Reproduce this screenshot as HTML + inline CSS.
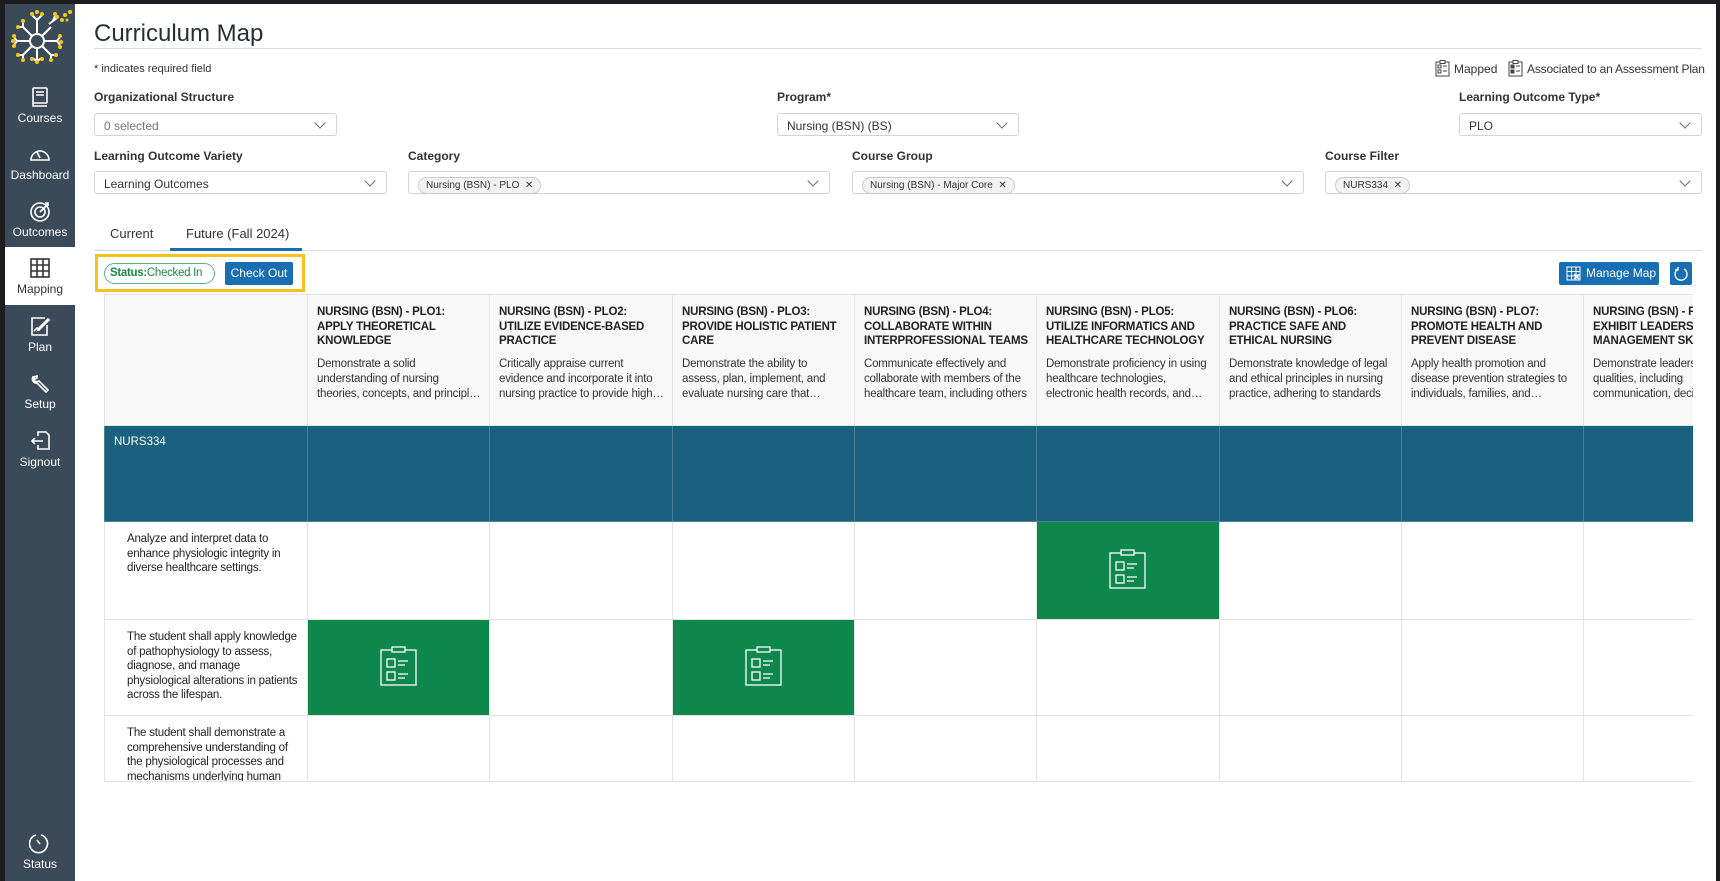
<!DOCTYPE html>
<html><head><meta charset="utf-8">
<style>
*{box-sizing:border-box;margin:0;padding:0}
body{width:1720px;height:881px;background:#1c1c1e;font-family:"Liberation Sans",Arial,sans-serif;color:#222;position:relative;overflow:hidden}
.side{position:absolute;left:5px;top:4px;width:70px;height:877px;background:#3b4a58}
.main{position:absolute;left:75px;top:4px;width:1641px;height:877px;background:#fff;overflow:hidden}
.nav{position:absolute;left:0;width:70px;text-align:center;color:#fff;font-size:12px}
.nav svg{display:block;margin:0 auto 3px}
.nav.act{background:#fff;color:#333;height:58px;padding-top:10px}
.a{position:absolute}
.lbl{position:absolute;font-size:12px;font-weight:bold;color:#333}
.sel{position:absolute;height:23px;border:1px solid #d4d4d4;border-radius:3px;font-size:12px;color:#333;padding:5px 9px;background:#fff}
.sel:after{content:"";position:absolute;right:12px;top:5px;width:7px;height:7px;border-right:1px solid #666;border-bottom:1px solid #666;transform:rotate(45deg)}
.chip{display:inline-block;border:1px solid #ccc;background:#f2f2f2;border-radius:10px;font-size:10px;padding:2px 7px;margin-top:-3px;color:#333}
.wrap{position:absolute;left:29px;top:290px;width:1589px;height:500px;overflow:hidden}
table{position:absolute;left:0;top:0;border-collapse:collapse;table-layout:fixed;width:1661px}
td{border:1px solid #e4e4e4;vertical-align:top;font-size:11.5px}
th{border:1px solid #e4e4e4;background:#f8f8f8;text-align:left;vertical-align:top;padding:10px 8px 10px 9px;font-size:11.5px;font-weight:normal;color:#222}
th b{display:-webkit-box;-webkit-line-clamp:3;-webkit-box-orient:vertical;height:44px;line-height:14.5px;font-size:11.5px;overflow:hidden;margin-bottom:8px;letter-spacing:-0.2px}
th span{display:-webkit-box;-webkit-line-clamp:3;-webkit-box-orient:vertical;line-height:15px;height:45px;overflow:hidden;color:#333;letter-spacing:-0.2px}
tr.n td{background:#19617f;border-color:#4b7f96;color:#fff}
td.t{padding:10px 8px 0 22px;line-height:14.5px;color:#222;letter-spacing:-0.2px}
td.g{background:#0d874c}
</style></head><body>
<div class="side">
<svg class="a" style="left:4px;top:4px" width="64" height="56" viewBox="0 0 64 56">
<g stroke="#fff" stroke-width="2" fill="none"><circle cx="28" cy="33" r="7"/>
<path d="M28 26V12M28 40V53M21 33H8M35 33H48M23 28L14 19M33 28L42 19M23 38L14 47M33 38L42 47M28 12l-5-5M28 12l5-5M28 53l-5-3M28 53l5-3M8 33l-3-4M8 33l-3 4M48 33l3-4M48 33l3 4M14 19l-5 0M14 19l0-5M42 47l5 0M42 47l0 5M14 47l-5 0M14 47l0 5M40 16l8-6M44 13l2-5"/></g>
<g fill="#f5c518"><circle cx="23" cy="6" r="2"/><circle cx="33" cy="6" r="2"/><circle cx="28" cy="4" r="2"/><circle cx="5" cy="28" r="2"/><circle cx="4" cy="33" r="2"/><circle cx="5" cy="38" r="2"/><circle cx="51" cy="28" r="2"/><circle cx="52" cy="34" r="2"/><circle cx="51" cy="39" r="2"/><circle cx="9" cy="19" r="2"/><circle cx="14" cy="13" r="2"/><circle cx="9" cy="47" r="2"/><circle cx="14" cy="52" r="2"/><circle cx="47" cy="47" r="2"/><circle cx="42" cy="52" r="2"/><circle cx="23" cy="51" r="2"/><circle cx="33" cy="51" r="2"/><circle cx="28" cy="54" r="2"/><circle cx="48" cy="9" r="2"/><circle cx="46" cy="6" r="2"/><circle cx="53" cy="12" r="2"/><circle cx="56" cy="7" r="2"/><circle cx="61" cy="4" r="2"/><circle cx="58" cy="12" r="1.5"/></g></svg>
<div class="nav" style="top:82px"><svg width="20" height="22" viewBox="0 0 20 22" fill="none" stroke="#fff" stroke-width="1.6"><rect x="3" y="2" width="14" height="15" rx="1"/><path d="M6 6h8M6 9h8M3 17v3h14"/></svg>Courses</div>
<div class="nav" style="top:139px"><svg width="24" height="22" viewBox="0 0 24 22" fill="none" stroke="#fff" stroke-width="1.6"><path d="M3 17A9 9 0 1 1 21 17Z"/><path d="M12 15l-3-6"/></svg>Dashboard</div>
<div class="nav" style="top:196px"><svg width="22" height="22" viewBox="0 0 22 22" fill="none" stroke="#fff" stroke-width="1.6"><circle cx="11" cy="12" r="9"/><circle cx="11" cy="12" r="5"/><path d="M11 12l8-8M16 3h3v3"/></svg>Outcomes</div>
<div class="nav act" style="top:243px"><svg width="22" height="22" viewBox="0 0 22 22" fill="none" stroke="#333" stroke-width="1.6"><rect x="2" y="2" width="18" height="18"/><path d="M8 2v18M14 2v18M2 8h18M2 14h18"/></svg>Mapping</div>
<div class="nav" style="top:311px"><svg width="22" height="22" viewBox="0 0 22 22" fill="none" stroke="#fff" stroke-width="1.6"><path d="M16 3H3v17h15V10"/><path d="M10 13l9-9 1 1-9 9-2 1z"/><path d="M5 16l3-3 2 2 3-4"/></svg>Plan</div>
<div class="nav" style="top:368px"><svg width="22" height="22" viewBox="0 0 22 22" fill="none" stroke="#fff" stroke-width="1.6"><path d="M4 5a4 4 0 0 0 6 4l9 9-2 2-9-9a4 4 0 0 1-4-6l2 2 2-1 0-2z"/></svg>Setup</div>
<div class="nav" style="top:426px"><svg width="22" height="22" viewBox="0 0 22 22" fill="none" stroke="#fff" stroke-width="1.6"><path d="M9 6V2h8l3 3v14H9v-4"/><path d="M14 11H3M6 8l-3 3 3 3"/></svg>Signout</div>
<div class="nav" style="top:828px"><svg width="22" height="22" viewBox="0 0 22 22" fill="none" stroke="#fff" stroke-width="1.6"><path d="M7 3a9 9 0 1 0 5 0"/><path d="M11 12l-3-4"/></svg>Status</div>
</div>
<div class="main">
<div class="a" style="left:19px;top:16px;font-size:24px;color:#2a2e33">Curriculum Map</div>
<div class="a" style="left:19px;top:44px;width:1608px;height:1px;background:#dcdcdc"></div>
<div class="a" style="left:19px;top:59px;font-size:11px;color:#333">* indicates required field</div>
<div class="a" style="left:1360px;top:56px;font-size:12px;color:#333;display:flex;align-items:center;gap:4px;white-space:nowrap">
<svg width="15" height="17" viewBox="0 0 15 17" fill="none" stroke="#444"><rect x="1" y="2" width="13" height="14"/><rect x="5" y="0.5" width="5" height="3" fill="#fff"/><rect x="3" y="5" width="3" height="3"/><rect x="3" y="10" width="3" height="3"/><path d="M8 6h4M8 11h4"/></svg>Mapped&nbsp;&nbsp;
<svg width="15" height="17" viewBox="0 0 15 17" fill="none" stroke="#444"><rect x="1" y="2" width="13" height="14"/><rect x="5" y="0.5" width="5" height="3" fill="#fff"/><rect x="3" y="5" width="3" height="3" fill="#444"/><rect x="3" y="10" width="3" height="3" fill="#444"/><path d="M8 6h4M8 11h4"/></svg><span style="letter-spacing:-0.2px">Associated to an Assessment Plan</span></div>
<div class="lbl" style="left:19px;top:86px">Organizational Structure</div>
<div class="lbl" style="left:702px;top:86px">Program*</div>
<div class="lbl" style="left:1384px;top:86px">Learning Outcome Type*</div>
<div class="sel" style="left:19px;top:109px;width:243px;color:#777">0 selected</div>
<div class="sel" style="left:702px;top:109px;width:242px">Nursing (BSN) (BS)</div>
<div class="sel" style="left:1384px;top:109px;width:243px">PLO</div>
<div class="lbl" style="left:19px;top:145px">Learning Outcome Variety</div>
<div class="lbl" style="left:333px;top:145px">Category</div>
<div class="lbl" style="left:777px;top:145px">Course Group</div>
<div class="lbl" style="left:1250px;top:145px">Course Filter</div>
<div class="sel" style="left:19px;top:167px;width:293px">Learning Outcomes</div>
<div class="sel" style="left:333px;top:167px;width:422px"><span class="chip">Nursing (BSN) - PLO &nbsp;✕</span></div>
<div class="sel" style="left:777px;top:167px;width:452px"><span class="chip">Nursing (BSN) - Major Core &nbsp;✕</span></div>
<div class="sel" style="left:1250px;top:167px;width:377px"><span class="chip">NURS334 &nbsp;✕</span></div>
<div class="a" style="left:35px;top:222px;font-size:13px;color:#333">Current</div>
<div class="a" style="left:111px;top:222px;font-size:13px;color:#333">Future (Fall 2024)</div>
<div class="a" style="left:19px;top:246px;width:1608px;height:1px;background:#dcdcdc"></div>
<div class="a" style="left:95px;top:244px;width:132px;height:3px;background:#1a6fb0"></div>
<div class="a" style="left:20px;top:250px;width:210px;height:38px;border:3px solid #f7c21b"></div>
<div class="a" style="left:29px;top:259px;width:111px;height:21px;border:1px solid #5ab57f;border-radius:11px;font-size:11.5px;color:#178a45;padding:3px 5px;white-space:nowrap;letter-spacing:-0.3px"><b>Status:</b>Checked In</div>
<div class="a" style="left:150px;top:258px;width:68px;height:23px;background:#176fb2;border-radius:2px;color:#fff;font-size:12px;text-align:center;line-height:23px">Check Out</div>
<div class="a" style="left:1484px;top:258px;width:100px;height:23px;background:#176fb2;border-radius:2px;color:#fff;font-size:12px;line-height:23px;padding-left:27px;white-space:nowrap">Manage Map
<svg class="a" style="left:7px;top:4px" width="15" height="15" viewBox="0 0 15 15" fill="none" stroke="#fff"><rect x="1" y="1" width="13" height="13"/><path d="M1 5.5h13M1 10h13M5.5 1v13M10 1v13"/><path d="M8 8l5 5M13 8l-5 5" stroke-width="1.5"/></svg></div>
<div class="a" style="left:1595px;top:258px;width:22px;height:23px;background:#176fb2;border-radius:2px">
<svg class="a" style="left:3px;top:4px" width="16" height="16" viewBox="0 0 16 16" fill="none" stroke="#fff" stroke-width="1.3"><path d="M5 3A6 6 0 1 0 11 3"/><path d="M5 1v3H2"/></svg></div>
<div class="wrap">
<table>
<colgroup><col style="width:203px"><col style="width:182px"><col style="width:183px"><col style="width:182px"><col style="width:182px"><col style="width:183px"><col style="width:182px"><col style="width:182px"><col style="width:182px"></colgroup>
<tr style="height:131px"><th></th>
<th><b>NURSING (BSN) - PLO1: APPLY THEORETICAL KNOWLEDGE</b><span>Demonstrate a solid understanding of nursing theories, concepts, and principles across practice settings</span></th>
<th><b>NURSING (BSN) - PLO2: UTILIZE EVIDENCE-BASED PRACTICE</b><span>Critically appraise current evidence and incorporate it into nursing practice to provide high quality care</span></th>
<th><b>NURSING (BSN) - PLO3: PROVIDE HOLISTIC PATIENT CARE</b><span>Demonstrate the ability to assess, plan, implement, and evaluate nursing care that addresses needs</span></th>
<th><b>NURSING (BSN) - PLO4: COLLABORATE WITHIN INTERPROFESSIONAL TEAMS</b><span>Communicate effectively and collaborate with members of the healthcare team, including others</span></th>
<th><b>NURSING (BSN) - PLO5: UTILIZE INFORMATICS AND HEALTHCARE TECHNOLOGY</b><span>Demonstrate proficiency in using healthcare technologies, electronic health records, and more</span></th>
<th><b>NURSING (BSN) - PLO6: PRACTICE SAFE AND ETHICAL NURSING</b><span>Demonstrate knowledge of legal and ethical principles in nursing practice, adhering to standards</span></th>
<th><b>NURSING (BSN) - PLO7: PROMOTE HEALTH AND PREVENT DISEASE</b><span>Apply health promotion and disease prevention strategies to individuals, families, and communities</span></th>
<th><b>NURSING (BSN) - PLO8: EXHIBIT LEADERSHIP AND MANAGEMENT SKILLS</b><span>Demonstrate leadership qualities, including communication, decision making and more</span></th></tr>
<tr class="n" style="height:96px"><td style="padding:10px 9px">NURS334</td><td></td><td></td><td></td><td></td><td></td><td></td><td></td><td></td></tr>
<tr style="height:98px"><td class="t">Analyze and interpret data to enhance physiologic integrity in diverse healthcare settings.</td><td></td><td></td><td></td><td></td><td class="g">ICON</td><td></td><td></td><td></td></tr>
<tr style="height:96px"><td class="t">The student shall apply knowledge of pathophysiology to assess, diagnose, and manage physiological alterations in patients across the lifespan.</td><td class="g">ICON</td><td></td><td class="g">ICON</td><td></td><td></td><td></td><td></td><td></td></tr>
<tr style="height:65px"><td class="t" style="overflow:hidden"><div style="height:55px;overflow:hidden">The student shall demonstrate a comprehensive understanding of the physiological processes and mechanisms underlying human</div></td><td></td><td></td><td></td><td></td><td></td><td></td><td></td><td></td></tr>
</table>
</div>
</div>
<script>
document.querySelectorAll('td.g').forEach(function(c){c.style.textAlign='center';c.style.verticalAlign='middle';c.innerHTML='<svg width="38" height="40" viewBox="0 0 38 40" fill="none" stroke="#fff" stroke-width="1.3"><rect x="1" y="4" width="35" height="35"/><rect x="12" y="1" width="13" height="5" fill="#0d874c"/><rect x="7" y="13" width="8" height="8"/><rect x="7" y="26" width="8" height="8"/><path d="M18 15h10M18 19h7M18 28h10M18 32h7"/></svg>';});
</script>
</body></html>
